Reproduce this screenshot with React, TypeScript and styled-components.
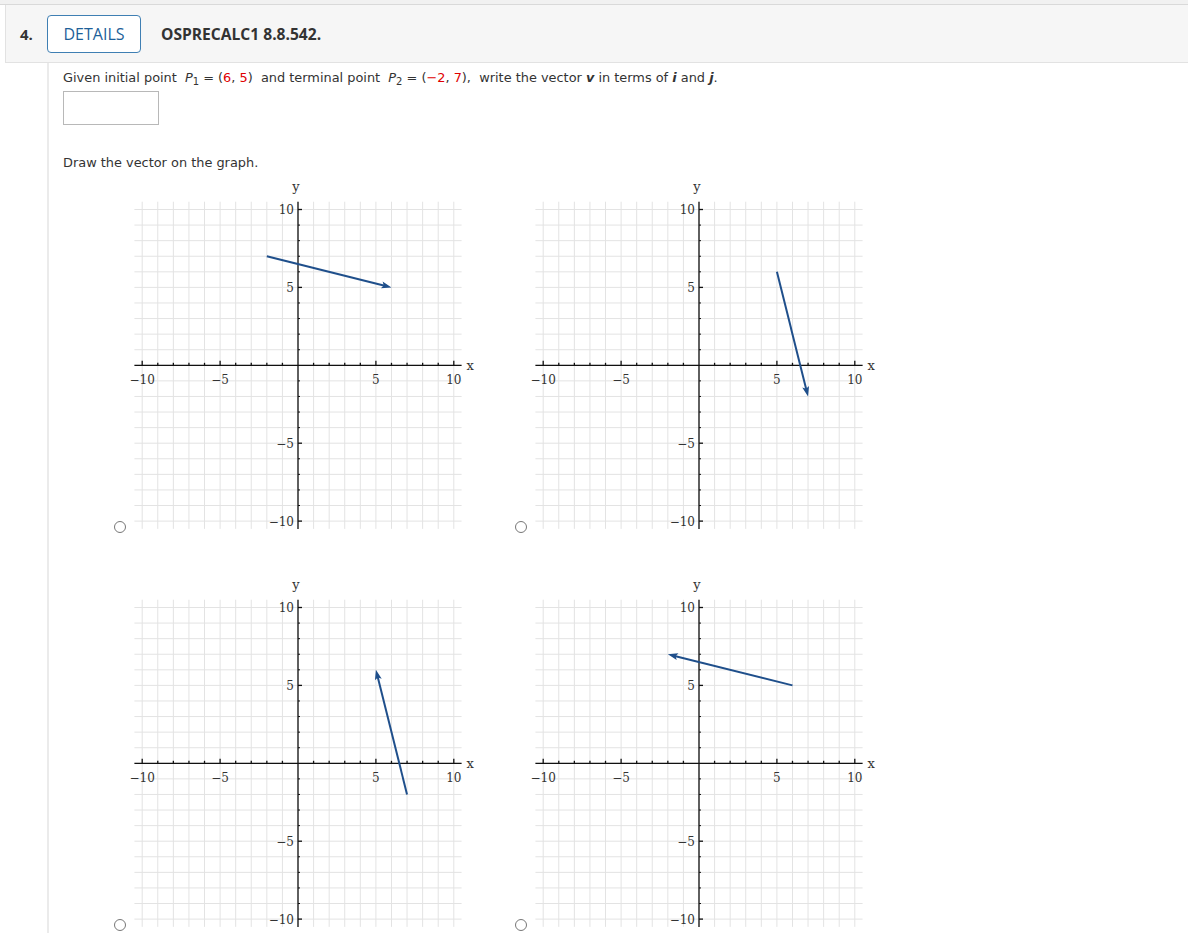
import styled, {createGlobalStyle} from 'styled-components'

const GlobalStyle = createGlobalStyle`
  body {
    margin: 0;
    background: #fff;
    font-family: "DejaVu Sans", Verdana, sans-serif;
  }
`

const TopStrip = styled.div`
  height: 4px;
  background: #f1f1f1;
  border-bottom: 1px solid #d9d9d9;
`

const Header = styled.div`
  display: flex;
  align-items: center;
  margin-left: 5px;
  height: 57px;
  padding-left: 14px;
  background: #f6f6f6;
  border-left: 1px solid #e2e2e2;
  border-bottom: 1px solid #e2e2e2;
  font-family: "Open Sans", "Liberation Sans", sans-serif;
`

const Number = styled.div`
  width: 27px;
  font-size: 15px;
  font-weight: 700;
  color: #333;
`

const DetailsButton = styled.button`
  width: 94px;
  height: 38px;
  border: 1px solid #3f7fb3;
  border-radius: 4px;
  background: #fff;
  color: #1d5f99;
  font-family: "Open Sans", "Liberation Sans", sans-serif;
  font-size: 16px;
  font-weight: 500;
  padding: 0;
`

const Title = styled.div`
  margin-left: 20px;
  font-size: 15.6px;
  font-weight: 700;
  color: #333;
`

const Body = styled.div`
  margin-left: 47px;
  border-left: 2px solid #ebebeb;
  padding: 7px 0 0 14px;
  font-size: 12.9px;
  color: #333;
`

const Question = styled.div`
  line-height: 16px;
`

const MathVar = styled.i`
  font-family: "DejaVu Sans", sans-serif;
  margin-left: 4px;
`

const Sub = styled.sub`
  font-size: 10px;
  vertical-align: -3px;
  line-height: 0;
`

const Red = styled.span`
  color: #e00000;
`

const Bold = styled.b`
  font-style: italic;
`

const AnswerBox = styled.div`
  margin-top: 5px;
  width: 94px;
  height: 32px;
  border: 1px solid #b8b8b8;
`

const Prompt = styled.div`
  margin-top: 30px;
  line-height: 16px;
`

const Graphs = styled.div`
  display: grid;
  grid-template-columns: 401px 401px;
  row-gap: 40px;
  margin: 6px 0 0 51px;
`

const Cell = styled.div`
  display: flex;
  align-items: flex-end;
`

const Radio = styled.span`
  flex: none;
  width: 10px;
  height: 10px;
  margin: 0 2px 2px 0;
  border: 1px solid #777;
  border-radius: 50%;
  background: #fff;
`

const S = 15.58
const OX = 170
const OY = 188.3
const W = 350
const H = 358
const EXT = 10.5 * S
const BLUE = '#1f4f8b'

const px = (x: number) => OX + x * S
const py = (y: number) => OY - y * S

const ticks = Array.from({length: 21}, (_, i) => i - 10)

type Pt = [number, number]

const Arrow = ({from, to}: {from: Pt; to: Pt}) => {
  const x1 = px(from[0])
  const y1 = py(from[1])
  const x2 = px(to[0])
  const y2 = py(to[1])
  const len = Math.hypot(x2 - x1, y2 - y1)
  const dx = (x2 - x1) / len
  const dy = (y2 - y1) / len
  const head = 10
  const half = 3.5
  const bx = x2 - dx * head
  const by = y2 - dy * head
  const pts = [
    [x2, y2],
    [bx - dy * half, by + dx * half],
    [bx + dx * 2, by + dy * 2],
    [bx + dy * half, by - dx * half],
  ]
    .map((p) => p.join(','))
    .join(' ')
  return (
    <g>
      <line x1={x1} y1={y1} x2={bx + dx * 3} y2={by + dy * 3} stroke={BLUE} strokeWidth={2} />
      <polygon points={pts} fill={BLUE} />
    </g>
  )
}

const label = (n: number) => (n < 0 ? `\u2212${-n}` : `${n}`)

const Graph = ({from, to}: {from: Pt; to: Pt}) => (
  <svg width={W} height={H} viewBox={`0 0 ${W} ${H}`}>
    <g stroke="#e3e3e3" strokeWidth={1}>
      {ticks.map((t) => (
        <line key={`v${t}`} x1={px(t)} y1={OY - EXT} x2={px(t)} y2={OY + EXT} />
      ))}
      {ticks.map((t) => (
        <line key={`h${t}`} x1={OX - EXT} y1={py(t)} x2={OX + EXT} y2={py(t)} />
      ))}
    </g>
    <g stroke="#111" strokeWidth={1.3}>
      <line x1={OX - EXT} y1={OY} x2={OX + EXT} y2={OY} />
      <line x1={OX} y1={OY - EXT} x2={OX} y2={OY + EXT} />
      {ticks
        .filter((t) => t !== 0)
        .map((t) => {
          const major = t % 5 === 0
          return (
            <g key={`t${t}`}>
              <line x1={px(t)} y1={OY} x2={px(t)} y2={OY - (major ? 4.5 : 2.5)} />
              <line x1={OX} y1={py(t)} x2={OX + (major ? 4 : 2)} y2={py(t)} strokeWidth={major ? 1.3 : 1} />
            </g>
          )
        })}
    </g>
    <g fontFamily='"DejaVu Serif", "Liberation Serif", serif' fontSize={12} fill="#333">
      {[-10, -5, 5, 10].map((t) => (
        <text key={`xl${t}`} x={px(t)} y={OY + 19} textAnchor="middle">
          {label(t)}
        </text>
      ))}
      {[-10, -5, 5, 10].map((t) => (
        <text key={`yl${t}`} x={OX - 4} y={py(t) + 4.5} textAnchor="end">
          {label(t)}
        </text>
      ))}
      <text x={OX + EXT + 5} y={OY + 5} fontSize={13}>
        x
      </text>
      <text x={OX - 2} y={OY - EXT - 11} fontSize={13} textAnchor="middle">
        y
      </text>
    </g>
    <Arrow from={from} to={to} />
  </svg>
)

const options: {from: Pt; to: Pt}[] = [
  {from: [-2, 7], to: [6, 5]},
  {from: [5, 6], to: [7, -2]},
  {from: [7, -2], to: [5, 6]},
  {from: [6, 5], to: [-2, 7]},
]

export default function App() {
  return (
    <>
      <GlobalStyle />
      <TopStrip />
      <Header>
        <Number>4.</Number>
        <DetailsButton>DETAILS</DetailsButton>
        <Title>OSPRECALC1 8.8.542.</Title>
      </Header>
      <Body>
        <Question>
          Given initial point <MathVar>P</MathVar>
          <Sub>1</Sub> = (<Red>6</Red>, <Red>5</Red>)&nbsp; and terminal point{' '}
          <MathVar>P</MathVar>
          <Sub>2</Sub> = (<Red>−2</Red>, <Red>7</Red>),&nbsp; write the vector <Bold>v</Bold> in terms of{' '}
          <Bold>i</Bold> and <Bold>j</Bold>.
        </Question>
        <AnswerBox />
        <Prompt>Draw the vector on the graph.</Prompt>
        <Graphs>
          {options.map((o, i) => (
            <Cell key={i}>
              <Radio />
              <Graph from={o.from} to={o.to} />
            </Cell>
          ))}
        </Graphs>
      </Body>
    </>
  )
}
